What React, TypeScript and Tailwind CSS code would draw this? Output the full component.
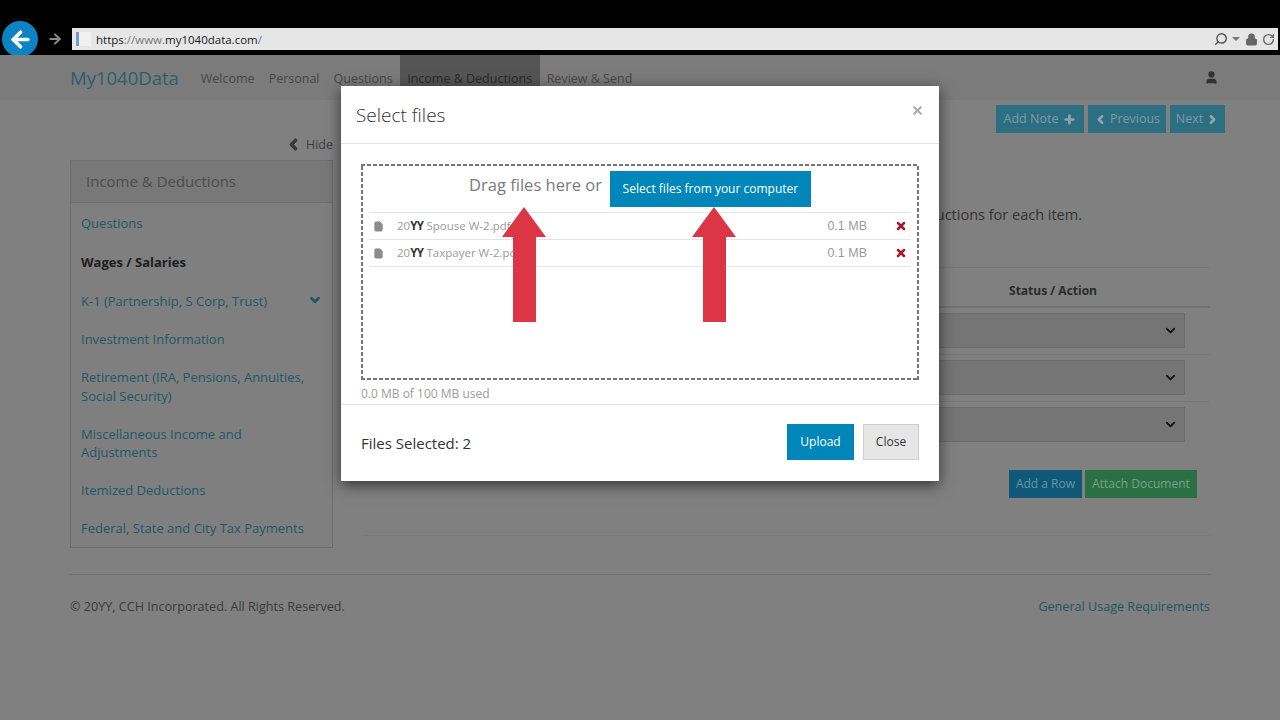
import { ChevronDown, ChevronLeft, ChevronRight, ArrowLeft, ArrowRight, Search, Lock, RotateCw, Plus, User, X, File } from "lucide-react";

const font = { fontFamily: '"Open Sans", sans-serif' };

const navItems = ["Welcome", "Personal", "Questions"];

const sideLinks = [
  { label: "Questions", h: "h-[40px]" },
  { label: "Wages / Salaries", h: "h-[39px]", active: true },
  { label: "K-1 (Partnership, S Corp, Trust)", h: "h-[38px]", chevron: true },
  { label: "Investment Information", h: "h-[38px]" },
  { label: "Retirement (IRA, Pensions, Annuities, Social Security)", h: "h-[57px]" },
  { label: "Miscellaneous Income and Adjustments", h: "h-[56px]" },
  { label: "Itemized Deductions", h: "h-[38px]" },
  { label: "Federal, State and City Tax Payments", h: "h-[38px]" },
];

const files = ["Spouse W-2.pdf", "Taxpayer W-2.pdf"];

function BrowserBar() {
  return (
    <div className="h-[55px] bg-black flex items-start relative shrink-0 overflow-hidden">
      <div className="w-[36px] h-[36px] rounded-full bg-[#0d83c4] ml-[2px] mt-[21px] flex items-center justify-center shrink-0">
        <ArrowLeft className="w-[25px] h-[25px] text-white" strokeWidth={3.5} />
      </div>
      <ArrowRight className="w-[16px] h-[16px] text-[#8a8a8a] ml-[9px] mt-[31px] shrink-0" strokeWidth={3} />
      <div className="ml-[9px] mt-[28px] w-[1206px] h-[22px] bg-[#e6e6e6] flex items-center pl-[4px] pr-[3px]">
        <div className="w-[15px] h-[14px] bg-[#f0f0f0] border-l-[3px] border-[#6f9fd0] shrink-0" />
        <div className="text-[11.5px] ml-[5px] pt-[2px] text-[#1a1a1a] grow" style={font}>
          https<span className="text-[#777]">://www.</span>my1040data.com<span className="text-[#777]">/</span>
        </div>
        <Search className="w-[14px] h-[14px] text-[#555] -scale-x-100" strokeWidth={2.5} />
        <div className="w-0 h-0 border-x-[4px] border-x-transparent border-t-[4px] border-t-[#777] ml-[4px]" />
        <Lock className="w-[13px] h-[13px] text-[#666] ml-[5px]" fill="#666" />
        <RotateCw className="w-[13px] h-[13px] text-[#666] ml-[4px]" strokeWidth={2.5} />
      </div>
    </div>
  );
}

function TopNav() {
  return (
    <div className="h-[45px] bg-[#7b7b7b] flex items-stretch pl-[70px] pr-[60px] shrink-0">
      <div className="text-[18.5px] text-[#2c5f6e] self-center mr-[22px]">My1040Data</div>
      {navItems.map((n) => (
        <div key={n} className="text-[12.5px] text-[#474747] self-center pt-[3px] mr-[14px]">
          {n}
        </div>
      ))}
      <div className="w-[140px] -ml-[7px] bg-[#555] text-[12.5px] text-[#2a2a2a] flex items-center justify-center pt-[3px]">
        Income &amp; Deductions
      </div>
      <div className="text-[12.5px] text-[#474747] self-center pt-[3px] ml-[7px] grow">Review &amp; Send</div>
      <User className="w-[15px] h-[15px] text-[#333] self-center -mt-[1px] mr-[1px]" fill="#333" />
    </div>
  );
}

function Sidebar() {
  return (
    <div className="w-[263px] shrink-0">
      <div className="h-[55px] flex items-start justify-end gap-[4px] text-[12.5px] text-[#3f3f3f] pt-[31px]">
        <ChevronLeft className="w-[17px] h-[17px] text-[#3a3a3a]" strokeWidth={5} />
        Hide
      </div>
      <div className="border border-[#6e6e6e] h-[388px] bg-[#7f7f7f]">
        <div className="h-[42px] bg-[#787878] border-b border-[#6e6e6e] flex items-center pl-[15px] text-[15px] text-[#4d4d4d]">
          Income &amp; Deductions
        </div>
        {sideLinks.map((s) => (
          <div
            key={s.label}
            className={`${s.h} flex items-center justify-between pl-[10px] pr-[10px] text-[13px] leading-[18.5px] ${
              s.active ? "font-bold text-[#1d1d1d]" : "text-[#1f5766]"
            }`}
          >
            <span className="max-w-[230px]">{s.label}</span>
            {s.chevron && <ChevronDown className="w-[14px] h-[14px] text-[#1f5766] shrink-0 -mt-[3px]" strokeWidth={5} />}
          </div>
        ))}
      </div>
    </div>
  );
}

function Main() {
  return (
    <div className="ml-[30px] grow flex flex-col">
      <div className="flex justify-end gap-[4px] -mr-[15px] h-[28px] text-[12.5px] text-[#7f9aa3]">
        <div className="w-[88px] bg-[#2c6f82] flex items-center justify-center gap-[5px] pt-[1px]">
          Add Note <Plus className="w-[13px] h-[13px] text-[#8fa5ac]" strokeWidth={5} />
        </div>
        <div className="w-[78px] bg-[#2c6f82] flex items-center justify-center gap-[3px] pt-[1px]">
          <ChevronLeft className="w-[13px] h-[13px] text-[#8fa5ac]" strokeWidth={5} /> Previous
        </div>
        <div className="w-[55px] bg-[#2c6f82] flex items-center justify-center gap-[3px] pt-[1px]">
          Next <ChevronRight className="w-[13px] h-[13px] text-[#8fa5ac]" strokeWidth={5} />
        </div>
      </div>
      <div className="h-[92px] flex items-end justify-end pr-[128px] text-[14.5px] text-[#333]">
        <span className="leading-[20px]">Please read the instructions for each item.</span>
      </div>
      <div className="mt-[42px] border-t border-[#787878] h-[39px] flex items-end justify-end pr-[113px] pb-[6px] text-[12px] font-bold text-[#2b2b2b]">
        Status / Action
      </div>
      <div className="border-t-2 border-[#727272]" />
      {[0, 1, 2].map((i) => (
        <div key={i} className={`pt-[5px] pb-[6px] pr-[25px] ${i < 2 ? "border-b border-[#787878]" : ""}`}>
          <div className="h-[35px] bg-[#757575] border border-[#6c6c6c] flex items-center justify-end pr-[6px]">
            <ChevronDown className="w-[15px] h-[15px] text-[#111]" strokeWidth={3} />
          </div>
        </div>
      ))}
      <div className="flex justify-end gap-[3px] pr-[13px] mt-[22px] text-[12px]">
        <div className="w-[73px] h-[28px] bg-[#0f5877] text-[#6b95a6] flex items-center justify-center">Add a Row</div>
        <div className="w-[112px] h-[28px] bg-[#2b7045] text-[#76a285] flex items-center justify-center">Attach Document</div>
      </div>
      <div className="mt-[37px] border-b border-[#7a7a7a]" />
    </div>
  );
}

function Footer() {
  return (
    <div className="mt-[26px] border-t border-[#6f6f6f] pt-[23px] flex justify-between text-[12.6px]">
      <span className="text-[#3a3a3a]">© 20YY, CCH Incorporated. All Rights Reserved.</span>
      <span className="text-[#1f5766]">General Usage Requirements</span>
    </div>
  );
}

function FileRow({ name }: { name: string }) {
  return (
    <div className="h-[27px] border-b border-[#e4e4e4] flex items-center pl-[4px] pr-[4px] text-[#9a9a9a] text-[11.5px]">
      <File className="w-[11px] h-[11px] text-[#8c8c8c] shrink-0" fill="#8c8c8c" />
      <div className="ml-[13px] w-[130px] overflow-hidden whitespace-nowrap">
        20<span className="font-bold text-[#333] tracking-[-0.5px]">YY</span> {name}
      </div>
      <div className="ml-auto text-[12.5px]" style={{ fontFamily: '"Liberation Sans", sans-serif' }}>0.1 MB</div>
      <X className="w-[12px] h-[12px] text-[#a9172a] ml-[28px]" strokeWidth={5} />
    </div>
  );
}

function UploadModal() {
  return (
    <div className="absolute left-[341px] top-[86px] w-[598px] h-[395px] bg-white flex flex-col shadow-[0_4px_14px_rgba(0,0,0,0.6)]">
      <div className="h-[58px] border-b border-[#e5e5e5] flex items-center justify-between pl-[15px] pr-[15px] pt-[1px] shrink-0">
        <span className="text-[19px] text-[#333] font-light">Select files</span>
        <X className="w-[13px] h-[13px] text-[#aaa] -mt-[9px]" strokeWidth={4} />
      </div>
      <div className="mx-[20px] mt-[20px] h-[216px] py-[2px] px-[8px] shrink-0 [background:repeating-linear-gradient(90deg,#777_0_4px,transparent_4px_6px)_top/100%_2px_no-repeat,repeating-linear-gradient(90deg,#777_0_4px,transparent_4px_6px)_bottom/100%_2px_no-repeat,repeating-linear-gradient(0deg,#777_0_4px,transparent_4px_6px)_left/2px_100%_no-repeat,repeating-linear-gradient(0deg,#777_0_4px,transparent_4px_6px)_right/2px_100%_no-repeat]">
        <div className="h-[47px] flex items-start justify-center gap-[8px] pt-[5px] border-b border-[#e4e4e4]">
          <span className="text-[16.5px] text-[#7b7b7b] mt-[2px] leading-[24px]">Drag files here or</span>
          <div className="w-[201px] h-[36px] bg-[#0086b8] text-white text-[12px] flex items-center justify-center">
            Select files from your computer
          </div>
        </div>
        {files.map((f) => (
          <FileRow key={f} name={f} />
        ))}
      </div>
      <div className="px-[20px] h-[24px] pt-[3px] text-[12px] text-[#9c9c9c] flex items-center shrink-0">0.0 MB of 100 MB used</div>
      <div className="border-t border-[#e5e5e5] grow flex items-center justify-between px-[20px]">
        <span className="text-[15px] text-[#333]">Files Selected: 2</span>
        <div className="flex gap-[9px] text-[12px] -mt-[2px]">
          <div className="w-[67px] h-[36px] bg-[#0086b8] text-white flex items-center justify-center">Upload</div>
          <div className="w-[56px] h-[36px] bg-[#e6e6e6] border border-[#cfcfcf] text-[#333] flex items-center justify-center">Close</div>
        </div>
      </div>
    </div>
  );
}

function RedArrow({ left }: { left: string }) {
  return (
    <svg className={`absolute top-[207px] ${left}`} width="44" height="116" viewBox="0 0 44 116">
      <path d="M22 0 L44 30 L34 30 L34 115 L11 115 L11 30 L0 30 Z" fill="#dc3545" />
    </svg>
  );
}

export default function App() {
  return (
    <div className="relative w-[1280px] h-[720px] overflow-hidden bg-[#808080] flex flex-col" style={font}>
      <BrowserBar />
      <TopNav />
      <div className="px-[70px] flex flex-col">
        <div className="flex pt-[5px]">
          <Sidebar />
          <Main />
        </div>
        <Footer />
      </div>
      <UploadModal />
      <RedArrow left="left-[502px]" />
      <RedArrow left="left-[692px]" />
    </div>
  );
}
